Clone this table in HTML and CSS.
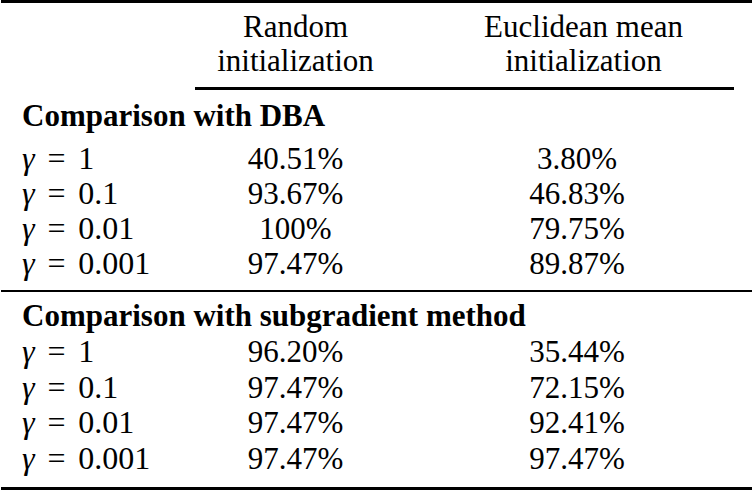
FILE: index.html
```html
<!DOCTYPE html>
<html lang="en">
<head>
<meta charset="utf-8">
<title>Comparison table</title>
<link rel="stylesheet" href="styles.css">
</head>
<body>
<div class="tbl">
  <div class="rule heavy top"></div>
  <div class="grid head">
    <div class="c1"></div>
    <div class="c2 hcell">Random<br>initialization</div>
    <div class="c3 hcell">Euclidean mean<br>initialization</div>
  </div>
  <div class="cmid"></div>

  <div class="section first">Comparison with DBA</div>
  <div class="block a">
    <div class="grid row"><div class="c1 lbl"><i class="g">γ</i><span class="eq">=</span>1</div><div class="c2">40.51%</div><div class="c3 v">3.80%</div></div>
    <div class="grid row"><div class="c1 lbl"><i class="g">γ</i><span class="eq">=</span>0.1</div><div class="c2">93.67%</div><div class="c3 v">46.83%</div></div>
    <div class="grid row"><div class="c1 lbl"><i class="g">γ</i><span class="eq">=</span>0.01</div><div class="c2">100%</div><div class="c3 v">79.75%</div></div>
    <div class="grid row"><div class="c1 lbl"><i class="g">γ</i><span class="eq">=</span>0.001</div><div class="c2">97.47%</div><div class="c3 v">89.87%</div></div>
  </div>

  <div class="rule mid"></div>

  <div class="section second">Comparison with subgradient method</div>
  <div class="block b">
    <div class="grid row"><div class="c1 lbl"><i class="g">γ</i><span class="eq">=</span>1</div><div class="c2">96.20%</div><div class="c3 v">35.44%</div></div>
    <div class="grid row"><div class="c1 lbl"><i class="g">γ</i><span class="eq">=</span>0.1</div><div class="c2">97.47%</div><div class="c3 v">72.15%</div></div>
    <div class="grid row"><div class="c1 lbl"><i class="g">γ</i><span class="eq">=</span>0.01</div><div class="c2">97.47%</div><div class="c3 v">92.41%</div></div>
    <div class="grid row"><div class="c1 lbl"><i class="g">γ</i><span class="eq">=</span>0.001</div><div class="c2">97.47%</div><div class="c3 v">97.47%</div></div>
  </div>

  <div class="rule heavy bottom"></div>
</div>
</body>
</html>
```

FILE: styles.css
```css
html, body {
  margin: 0;
  padding: 0;
  background: #ffffff;
}

body {
  font-family: "Liberation Serif", "Times New Roman", serif;
  font-size: 31px;
  color: #000000;
}

.tbl {
  width: 751px;
  margin-left: 1px;
  display: flex;
  flex-direction: column;
}

.rule {
  background: #000000;
}

.heavy {
  height: 3px;
}

.mid {
  height: 2px;
  margin-top: 9px;
}

.bottom {
  margin-top: 11px;
}

.grid {
  display: grid;
  grid-template-columns: 175px 239px 337px;
}

.head {
  padding-top: 7px;
  line-height: 34px;
}

.hcell {
  text-align: center;
}

.c2,
.c3 {
  text-align: center;
}

.v {
  padding-right: 13px;
}

.cmid {
  height: 3px;
  background: #000000;
  margin: 9px 18px 0 194px;
}

.section {
  font-weight: bold;
  padding-left: 21px;
  white-space: nowrap;
}

.section.first {
  line-height: 37px;
  margin-top: 7px;
}

.section.second {
  line-height: 36px;
  margin-top: 6px;
}

.block.a {
  margin-top: 7px;
}

.block.a .row {
  line-height: 35px;
}

.block.b .row {
  line-height: 35.5px;
}

.lbl {
  padding-left: 21px;
  white-space: nowrap;
  font-size: 32px;
}

.g {
  font-style: italic;
}

.eq {
  margin: 0 0.4em;
}
```
